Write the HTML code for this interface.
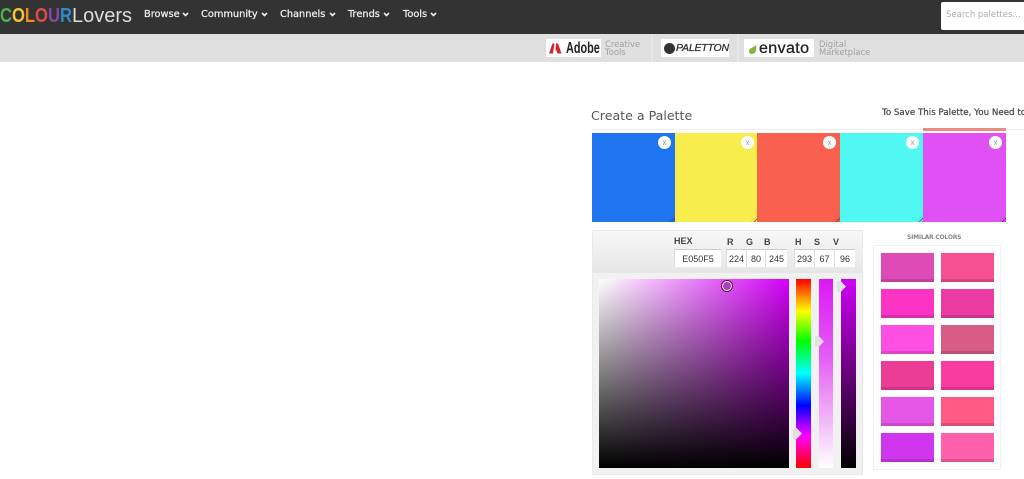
<!DOCTYPE html>
<html>
<head>
<meta charset="utf-8">
<style>
html,body{margin:0;padding:0;width:1024px;height:479px;overflow:hidden;background:#fff;font-family:"DejaVu Sans","Liberation Sans",sans-serif}
div,span{position:absolute;white-space:nowrap;box-sizing:border-box}
.nav{color:#eee;font-size:9.8px;top:8px;line-height:14px;font-weight:400;-webkit-text-stroke:.25px #eee}
.sw{top:133px;height:89px;width:83px}
.x{top:3px;right:4px;width:13px;height:13px;border-radius:50%;background:#fff;color:#999;font:8px/13px "Liberation Sans",sans-serif;text-align:center}
.grip{right:0;bottom:0;width:7px;height:7px;background:repeating-linear-gradient(135deg,transparent 0 1.500px,rgba(50,50,50,.6) 1.500px 2.500px);clip-path:polygon(100% 0,100% 100%,0 100%)}
.lab{font:bold 9px/10px "Liberation Sans",sans-serif;color:#444}
.inp{top:249px;height:18px;background:#fff;font:9px/18px "Liberation Sans",sans-serif;color:#333;text-align:center;border-top:1px solid #ccc;border-left:1px solid #ddd}
.s{width:53px;height:29px;border-bottom:3px solid rgba(0,0,0,.13)}
.tri{width:9px;height:11px;background:#e2e2e2;clip-path:polygon(0 0,40% 0,100% 50%,40% 100%,0 100%)}
.grey{color:#a0a0a0;font-size:8.400px;line-height:8px}
.logo{background:#fff;top:39px;height:18px}
</style>
</head>
<body>
<div style="left:0;top:0;width:1024px;height:34px;background:#333"></div>
<div style="left:0;top:34px;width:1024px;height:28px;background:#e0e0e0"></div>

<div style="left:0;top:3px;font:bold 20px/26px 'Liberation Sans',sans-serif;transform:scaleX(.83);transform-origin:0 0"><span style="position:static;color:#4caf50">C</span><span style="position:static;color:#f4c430">O</span><span style="position:static;color:#ef8a1d">L</span><span style="position:static;color:#dd4b4b">O</span><span style="position:static;color:#8e44ad">U</span><span style="position:static;color:#2a8fc8">R</span></div>
<div style="left:72px;top:3px;font:20px/26px 'Liberation Sans',sans-serif;color:#ddd">Lovers</div>

<div class="nav" style="left:144px">Browse</div>
<div class="nav" style="left:201px">Community</div>
<div class="nav" style="left:280px">Channels</div>
<div class="nav" style="left:348px">Trends</div>
<div class="nav" style="left:403px">Tools</div>
<svg style="position:absolute;left:0;top:0" width="500" height="34" fill="none" stroke="#eee" stroke-width="1.600"><path d="M183 13l2.500 2.500 2.500-2.500M262 13l2.500 2.500 2.500-2.500M330 13l2.500 2.500 2.500-2.500M384 13l2.500 2.500 2.500-2.500M431 13l2.500 2.500 2.500-2.500"/></svg>

<div style="left:941px;top:2px;width:83px;height:28px;background:#fff;border-radius:2px 0 0 2px"></div>
<div style="left:946px;top:9px;color:#aaa;font-size:8.500px;line-height:13px">Search palettes...</div>

<div style="left:651px;top:34px;width:2px;height:28px;background:#e8e8e8"></div>
<div style="left:737px;top:34px;width:2px;height:28px;background:#e8e8e8"></div>
<div class="logo" style="left:546px;width:55px"></div>
<svg style="position:absolute;left:548px;top:43px" width="14" height="11"><path d="M1 10.500L4.500 .5H6.500L5 10.500ZM8 .5H10L13.500 10.500H9.500L8.500 7.500H7.500Z" fill="#d8232a"/></svg>
<div style="left:566px;top:39px;font:bold 16px/19px 'Liberation Sans',sans-serif;color:#222;transform:scaleX(.68);transform-origin:0 0">Adobe</div>
<div class="grey" style="left:605px;top:40px">Creative<br>Tools</div>
<div class="logo" style="left:661px;width:68px"></div>
<div style="left:664px;top:43px;width:11px;height:11px;border-radius:50%;background:#333"></div>
<div style="left:676px;top:42px;font:italic 10.500px/13px 'Liberation Sans',sans-serif;color:#333;letter-spacing:-.2px;-webkit-text-stroke:.3px #333">PALETTON</div>
<div class="logo" style="left:744px;width:70px"></div>
<svg style="position:absolute;left:748px;top:44px" width="11" height="11"><path d="M1 7C1 4 5 4 8 1C9 5 8 10 4 10C2 10 1 9 1 7Z" fill="#82b541"/></svg>
<div style="left:759px;top:39px;font:16px/19px 'Liberation Sans',sans-serif;color:#222;letter-spacing:.4px;-webkit-text-stroke:.3px #222">envato</div>
<div class="grey" style="left:819px;top:40px">Digital<br>Marketplace</div>

<div style="left:591px;top:108px;font-size:12.600px;line-height:16px;color:#555">Create a Palette</div>
<div style="left:882px;top:107px;font-size:8.700px;line-height:12px;color:#444;width:142px;overflow:hidden;-webkit-text-stroke:.2px #444">To Save This Palette, You Need to</div>
<div style="left:592px;top:129px;width:432px;height:1px;background:#eee"></div>
<div style="left:923px;top:128px;width:83px;height:3px;background:#e78a80"></div>

<div class="sw" style="left:592px;background:#1f75f0"><div class="x">x</div><div class="grip"></div></div>
<div class="sw" style="left:675px;background:#f7ee4d"><div class="x">x</div><div class="grip"></div></div>
<div class="sw" style="left:757px;background:#f9614e"><div class="x">x</div><div class="grip"></div></div>
<div class="sw" style="left:840px;background:#50f8f1"><div class="x">x</div><div class="grip"></div></div>
<div class="sw" style="left:923px;background:#e050f5"><div class="x">x</div><div class="grip"></div></div>

<div style="left:592px;top:230px;width:271px;height:245px;background:#f1f1f1;border:1px solid #eaeaea"></div>
<div style="left:593px;top:231px;width:269px;height:42px;background:linear-gradient(#f7f7f7,#e6e6e6)"></div>
<div class="lab" style="left:674px;top:236px">HEX</div>
<div class="lab" style="left:727px;top:237px">R</div>
<div class="lab" style="left:746px;top:237px">G</div>
<div class="lab" style="left:764px;top:237px">B</div>
<div class="lab" style="left:795px;top:237px">H</div>
<div class="lab" style="left:814px;top:237px">S</div>
<div class="lab" style="left:833px;top:237px">V</div>
<div class="inp" style="left:674px;width:47px">E050F5</div>
<div class="inp" style="left:726px;width:20px">224</div>
<div class="inp" style="left:746px;width:19px">80</div>
<div class="inp" style="left:765px;width:22px">245</div>
<div class="inp" style="left:794px;width:20px">293</div>
<div class="inp" style="left:814px;width:20px">67</div>
<div class="inp" style="left:834px;width:21px">96</div>

<div style="left:599px;top:279px;width:190px;height:189px;background:linear-gradient(to bottom,rgba(0,0,0,0),#000),linear-gradient(to right,#fff,#d400f8)"></div>
<div style="left:722px;top:281px;width:10px;height:10px;border-radius:50%;background:#b13bc4;border:1.500px solid #fff;box-shadow:0 0 0 1px #603"></div>

<div style="left:796px;top:279px;width:15px;height:189px;background:linear-gradient(to bottom,#f00 0%,#ff0 17%,#0f0 33%,#0ff 50%,#00f 67%,#f0f 83%,#f00 100%)"></div>
<div style="left:819px;top:279px;width:14px;height:189px;background:linear-gradient(to bottom,#dc18f5 0%,#e45af5 40%,#f2b8f8 75%,#fff 100%)"></div>
<div style="left:841px;top:279px;width:15px;height:189px;background:linear-gradient(to bottom,#cf00f5,#000)"></div>
<div class="tri" style="left:793px;top:428px"></div>
<div class="tri" style="left:815px;top:336px"></div>
<div class="tri" style="left:837px;top:281px"></div>

<div style="left:907px;top:233px;font-size:6px;line-height:9px;font-weight:bold;color:#888;letter-spacing:-.2px">SIMILAR COLORS</div>
<div style="left:873px;top:245px;width:128px;height:225px;background:#fff;border:1px solid #eef0f2"></div>
<div class="s" style="left:881px;top:253px;background:#df4bb6"></div>
<div class="s" style="left:941px;top:253px;background:#f5508f"></div>
<div class="s" style="left:881px;top:289px;background:#fb34c6"></div>
<div class="s" style="left:941px;top:289px;background:#ea3ca2"></div>
<div class="s" style="left:881px;top:325px;background:#fd50e3"></div>
<div class="s" style="left:941px;top:325px;background:#d85c85"></div>
<div class="s" style="left:881px;top:361px;background:#ec3d96"></div>
<div class="s" style="left:941px;top:361px;background:#f83ca0"></div>
<div class="s" style="left:881px;top:397px;background:#e656e6"></div>
<div class="s" style="left:941px;top:397px;background:#fe5a85"></div>
<div class="s" style="left:881px;top:433px;background:#d035ee"></div>
<div class="s" style="left:941px;top:433px;background:#fe60ab"></div>
</body>
</html>
